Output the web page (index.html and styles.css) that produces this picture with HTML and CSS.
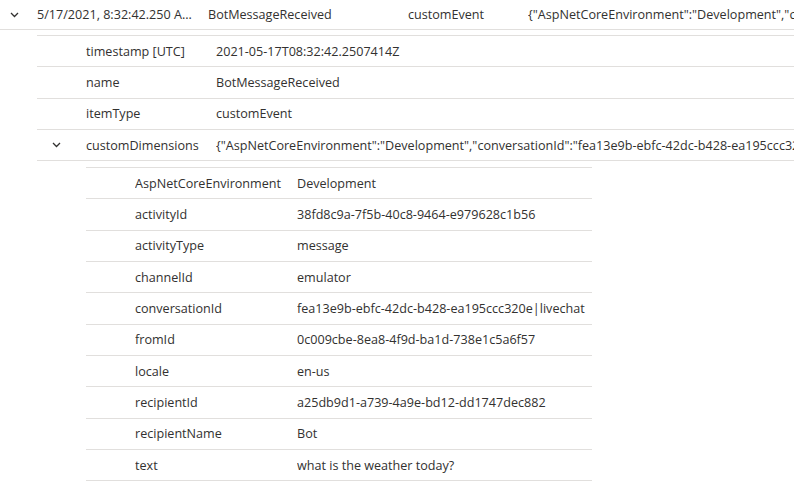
FILE: index.html
```html
<!DOCTYPE html>
<html>
<head>
<meta charset="utf-8">
<link rel="stylesheet" href="styles.css">
</head>
<body>
<div class="grid">
  <div class="top-row">
    <span class="chev top-chev"><svg width="9" height="6" viewBox="0 0 9 6"><path d="M1 1 L4.5 4.5 L8 1" fill="none" stroke="#323130" stroke-width="1.3"/></svg></span>
    <span class="cell">5/17/2021, 8:32:42.250 A...</span>
    <span class="cell">BotMessageReceived</span>
    <span class="cell">customEvent</span>
    <span class="cell">{"AspNetCoreEnvironment":"Development","conversationId":"fea13e9b-ebfc-42dc-b428-ea195ccc320e|livechat"}</span>
  </div>
  <div class="detail">
    <div class="kv-table">
      <div class="kv"><span></span><span class="cell">timestamp [UTC]</span><span class="cell">2021-05-17T08:32:42.2507414Z</span></div>
      <div class="kv"><span></span><span class="cell">name</span><span class="cell">BotMessageReceived</span></div>
      <div class="kv"><span></span><span class="cell">itemType</span><span class="cell">customEvent</span></div>
      <div class="kv"><span class="chev inner-chev"><svg width="9" height="6" viewBox="0 0 9 6"><path d="M1 1 L4.5 4.5 L8 1" fill="none" stroke="#323130" stroke-width="1.3"/></svg></span><span class="cell">customDimensions</span><span class="cell">{"AspNetCoreEnvironment":"Development","conversationId":"fea13e9b-ebfc-42dc-b428-ea195ccc320e|livechat","fromId":"0c009cbe-8ea8-4f9d-ba1d-738e1c5a6f57"}</span></div>
      <div class="nested">
        <div class="kv2"><span></span><span class="cell">AspNetCoreEnvironment</span><span class="cell">Development</span></div>
        <div class="kv2"><span></span><span class="cell">activityId</span><span class="cell">38fd8c9a-7f5b-40c8-9464-e979628c1b56</span></div>
        <div class="kv2"><span></span><span class="cell">activityType</span><span class="cell">message</span></div>
        <div class="kv2"><span></span><span class="cell">channelId</span><span class="cell">emulator</span></div>
        <div class="kv2"><span></span><span class="cell">conversationId</span><span class="cell">fea13e9b-ebfc-42dc-b428-ea195ccc320e|livechat</span></div>
        <div class="kv2"><span></span><span class="cell">fromId</span><span class="cell">0c009cbe-8ea8-4f9d-ba1d-738e1c5a6f57</span></div>
        <div class="kv2"><span></span><span class="cell">locale</span><span class="cell">en-us</span></div>
        <div class="kv2"><span></span><span class="cell">recipientId</span><span class="cell">a25db9d1-a739-4a9e-bd12-dd1747dec882</span></div>
        <div class="kv2"><span></span><span class="cell">recipientName</span><span class="cell">Bot</span></div>
        <div class="kv2"><span></span><span class="cell">text</span><span class="cell">what is the weather today?</span></div>
      </div>
    </div>
  </div>
</div>
</body>
</html>
```

FILE: styles.css
```css
html, body {
  margin: 0;
  padding: 0;
  background: #ffffff;
  overflow: hidden;
}
body {
  width: 794px;
  height: 486px;
  font-family: "Open Sans", "Noto Sans", sans-serif;
  font-size: 12.6px;
  color: #323130;
}
.grid {
  width: 794px;
  overflow: hidden;
}
.cell {
  white-space: nowrap;
  overflow: hidden;
}
.chev {
  display: flex;
  align-items: center;
}
.chev svg {
  display: block;
}
.top-row {
  display: grid;
  grid-template-columns: 37px 171px 200px 120px 1fr;
  align-items: center;
  height: 29px;
  border-bottom: 1px solid #e1dfdd;
}
.top-chev {
  padding-left: 10px;
}
.detail {
  padding: 5px 0 0 37px;
}
.kv-table {
  border-top: 1px solid #e1dfdd;
}
.kv {
  display: grid;
  grid-template-columns: 49px 130px 1fr;
  align-items: center;
  height: 31.3px;
  box-sizing: border-box;
  border-bottom: 1px solid #e1dfdd;
}
.inner-chev {
  padding-left: 15px;
}
.nested {
  margin: 5.8px 0 0 49px;
  width: 506px;
  border-top: 1px solid #e1dfdd;
}
.kv2 {
  display: grid;
  grid-template-columns: 49px 162px 1fr;
  align-items: center;
  height: 31.35px;
  box-sizing: border-box;
  border-bottom: 1px solid #e1dfdd;
}
```
